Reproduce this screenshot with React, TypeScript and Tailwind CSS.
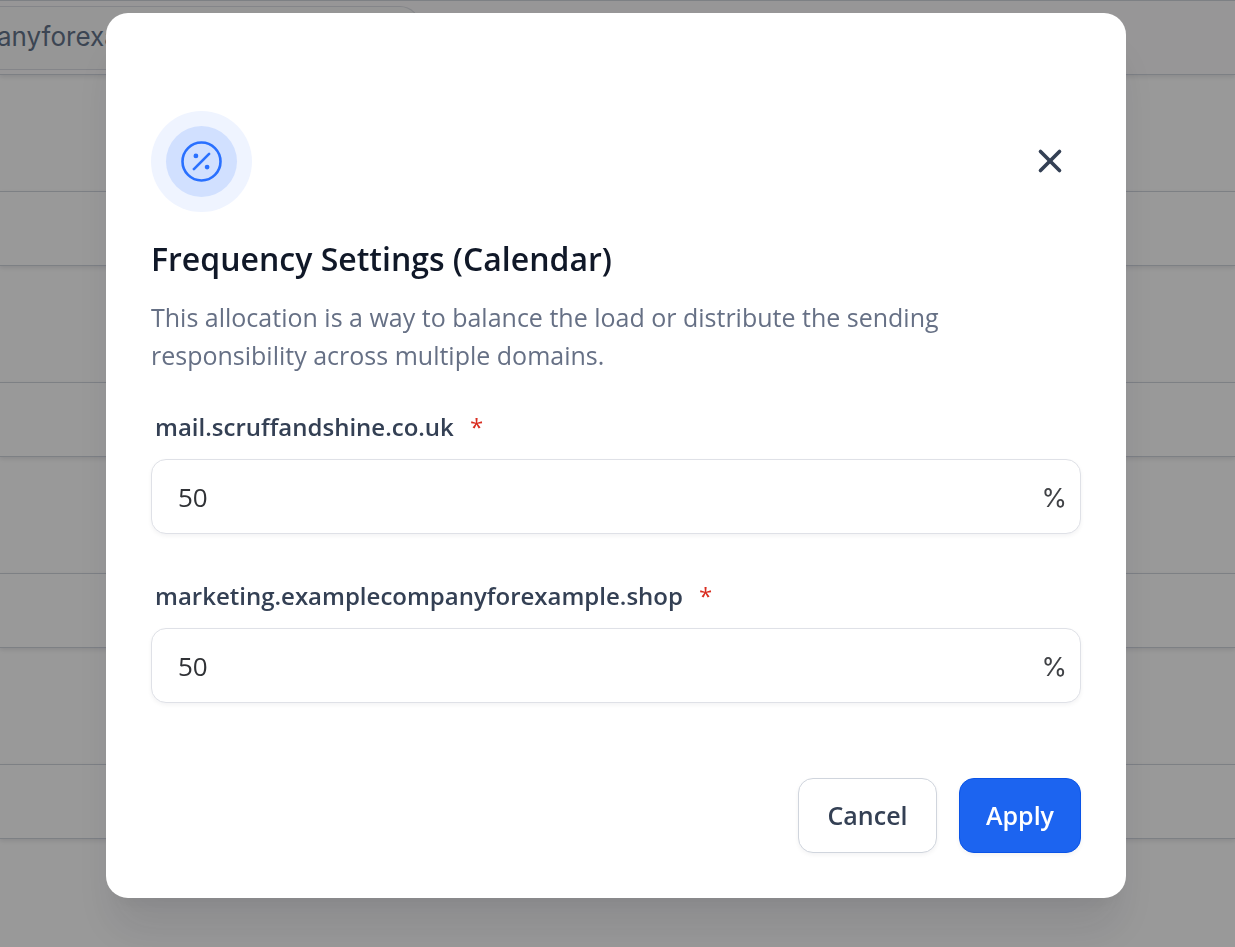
import React, { useState } from 'react';
import { X } from 'lucide-react';

interface Domain {
  id: string;
  name: string;
  share: string;
}

const initialDomains: Domain[] = [
  { id: 'mail', name: 'mail.scruffandshine.co.uk', share: '50' },
  { id: 'marketing', name: 'marketing.examplecompanyforexample.shop', share: '50' },
];

const PercentIcon: React.FC = () => (
  <svg width="45" height="45" viewBox="0 0 45 45" fill="none" stroke="#2970ff" strokeWidth="2.6" strokeLinecap="round" aria-hidden="true">
    <circle cx="22.5" cy="22.5" r="19" />
    <path d="M14.9 30.1 30.1 14.9" />
    <circle cx="16.9" cy="16.9" r="2.4" fill="#2970ff" stroke="none" />
    <circle cx="28.1" cy="28.1" r="2.4" fill="#2970ff" stroke="none" />
  </svg>
);

const SettingsPage: React.FC = () => (
  <div className="min-h-screen overflow-hidden bg-white">
    <div className="flex h-[75px] items-start border-y border-[#d0d5dd] bg-[#fcfafc] pt-[5px] shadow-[0_2px_4px_rgba(16,24,40,0.1)]">
      <div className="flex h-16 w-[420px] items-center rounded-r-[20px] border-y border-r border-[#dcdee4] bg-[#fafafa] pb-[3px] -indent-[3px] font-['Inter',sans-serif] text-[26px] text-[#64748b]">
        anyforexample.shop
      </div>
    </div>
    {[0, 1, 2, 3].map((row) => (
      <div key={row} className="pt-[116px]">
        <div className="h-[75px] border-y border-[#d0d5dd] bg-white shadow-[0_2px_4px_rgba(16,24,40,0.1)]" />
      </div>
    ))}
  </div>
);

interface PercentFieldProps {
  domain: Domain;
  onChange: (value: string) => void;
}

const PercentField: React.FC<PercentFieldProps> = ({ domain, onChange }) => (
  <div>
    <label htmlFor={domain.id} className="flex gap-4 pl-1 text-[24px] leading-9 font-semibold text-[#344054]">
      {domain.name}
      <span className="font-normal text-[#d92d20]">*</span>
    </label>
    <div className="mt-[14px] flex h-[75px] items-center rounded-[15px] border border-[#dfe1e7] bg-white pt-[2px] pr-[13px] pl-[26px] shadow-[0_2px_4px_rgba(16,24,40,0.05)]">
      <input
        id={domain.id}
        type="text"
        inputMode="numeric"
        value={domain.share}
        onChange={(e) => onChange(e.target.value)}
        className="min-w-0 flex-1 bg-transparent text-[26px] text-[#303236] outline-none"
      />
      <span className="font-['Inter',sans-serif] text-[26px] text-[#404246]">%</span>
    </div>
  </div>
);

const FrequencyDialog: React.FC = () => {
  const [domains, setDomains] = useState(initialDomains);

  const updateShare = (id: string, share: string) => {
    setDomains(domains.map((d) => (d.id === id ? { ...d, share } : d)));
  };

  return (
    <div
      role="dialog"
      aria-modal="true"
      aria-labelledby="dialog-title"
      className="w-full max-w-[1020px] rounded-[22px] bg-white px-[45px] pt-[98px] pb-[45px] shadow-[0_37px_45px_-7px_rgba(16,24,40,0.1),0_15px_15px_-7px_rgba(16,24,40,0.04)]"
    >
      <div className="flex items-center justify-between">
        <div className="flex size-[101px] items-center justify-center rounded-full bg-[#eff4ff]">
          <div className="flex size-[71px] items-center justify-center rounded-full bg-[#d1e0ff]">
            <PercentIcon />
          </div>
        </div>
        <button type="button" aria-label="Close" className="p-3 pb-[14px] text-[#344054]">
          <X size={38} strokeWidth={2.3} />
        </button>
      </div>

      <h1 id="dialog-title" className="mt-[21px] text-[32px] leading-[52px] font-semibold text-[#101828]">
        Frequency Settings (Calendar)
      </h1>
      <p className="mt-[13px] max-w-[840px] text-[25px] leading-[38px] text-[#667085]">
        This allocation is a way to balance the load or distribute the sending responsibility across multiple domains.
      </p>

      <form onSubmit={(e) => e.preventDefault()}>
        <div className="mt-[35px] flex flex-col gap-[44px]">
          {domains.map((domain) => (
            <PercentField key={domain.id} domain={domain} onChange={(value) => updateShare(domain.id, value)} />
          ))}
        </div>
        <div className="mt-[75px] flex justify-end gap-[22px] text-[25px] font-semibold">
          <button
            type="button"
            className="h-[75px] w-[139px] rounded-[15px] border border-[#d0d5dd] bg-white text-[#344054] shadow-[0_2px_4px_rgba(16,24,40,0.05)]"
          >
            Cancel
          </button>
          <button
            type="submit"
            className="h-[75px] w-[122px] rounded-[15px] border border-[#0a54e8] bg-[#1c64f0] text-white shadow-[0_2px_4px_rgba(16,24,40,0.05)]"
          >
            Apply
          </button>
        </div>
      </form>
    </div>
  );
};

export default function App() {
  return (
    <div className="font-['Open_Sans',sans-serif]">
      <SettingsPage />
      <div className="fixed inset-0 flex items-start justify-center overflow-auto bg-black/40 pt-[13px] pr-[3px]">
        <FrequencyDialog />
      </div>
    </div>
  );
}
